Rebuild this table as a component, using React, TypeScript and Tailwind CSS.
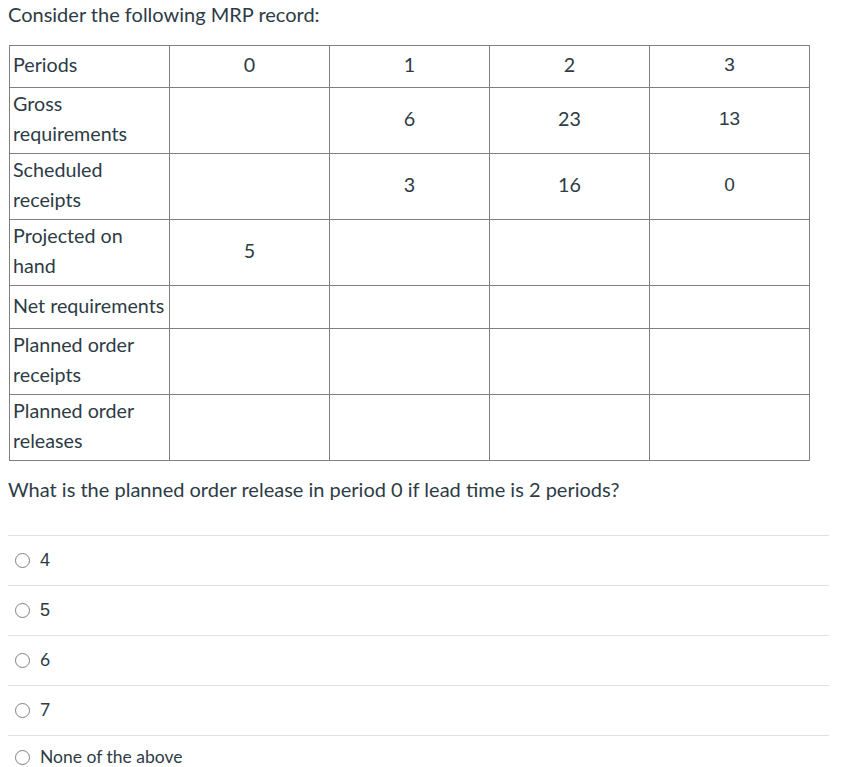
import React from 'react';

const rows: { label: string; h: string; cells: string[] }[] = [
  { label: 'Periods', h: 'h-[42px]', cells: ['0', '1', '2', '3'] },
  { label: 'Gross requirements', h: 'h-[66px]', cells: ['', '6', '23', '13'] },
  { label: 'Scheduled receipts', h: 'h-[66px]', cells: ['', '3', '16', '0'] },
  { label: 'Projected on hand', h: 'h-[66px]', cells: ['5', '', '', ''] },
  { label: 'Net requirements', h: 'h-[43px]', cells: ['', '', '', ''] },
  { label: 'Planned order receipts', h: 'h-[66px]', cells: ['', '', '', ''] },
  { label: 'Planned order releases', h: 'h-[66px]', cells: ['', '', '', ''] },
];

const options = [
  { text: '4', arial: true },
  { text: '5', arial: true },
  { text: '6', arial: false },
  { text: '7', arial: false },
  { text: 'None of the above', arial: false },
];

export default function App() {
  return (
    <div className="w-[841px] h-[767px] bg-white text-[#2d3b45] font-['Lato','Liberation_Sans',sans-serif] overflow-hidden">
      <div className="pl-2 -mt-[1px] text-[20px] leading-[30px]">Consider the following MRP record:</div>

      <table className="ml-[9px] mt-[16px] border-collapse table-fixed w-[800px] text-[19.7px] leading-[30px]">
        <colgroup>
          <col className="w-[160px]" />
          <col className="w-[160px]" />
          <col className="w-[160px]" />
          <col className="w-[160px]" />
          <col className="w-[160px]" />
        </colgroup>
        <tbody>
          {rows.map((r) => (
            <tr key={r.label} className={r.h}>
              <td className="border border-[#808080] pl-[3px] pr-0 pt-0 pb-[3px] align-middle">{r.label}</td>
              {r.cells.map((c, i) => (
                <td
                  key={i}
                  className={
                    i === 3
                      ? "border border-[#808080] text-center align-middle pb-[3px] text-[19px] font-['Liberation_Sans',sans-serif]"
                      : 'border border-[#808080] text-center align-middle pb-[3px]'
                  }
                >
                  {c}
                </td>
              ))}
            </tr>
          ))}
        </tbody>
      </table>

      <div className="pl-2 mt-[13px] text-[20px] leading-[30px]">
        What is the planned order release in period 0 if lead time is 2 periods?
      </div>

      <div className="ml-2 w-[821px] mt-[31px]">
        {options.map((o, idx) => (
          <div
            key={o.text}
            className={
              idx === 4
                ? 'border-t border-[#e0e0e0] h-[44px] flex items-center pl-[7px] gap-[10px]'
                : 'border-t border-[#e0e0e0] h-[50px] flex items-center pl-[7px] gap-[10px]'
            }
          >
            <span className="w-[15px] h-[15px] rounded-full border border-[#808080] bg-white shrink-0" />
            <span
              className={
                o.arial
                  ? "text-[18px] font-['Liberation_Sans',sans-serif]"
                  : 'text-[17.5px]'
              }
            >
              {o.text}
            </span>
          </div>
        ))}
      </div>
    </div>
  );
}
